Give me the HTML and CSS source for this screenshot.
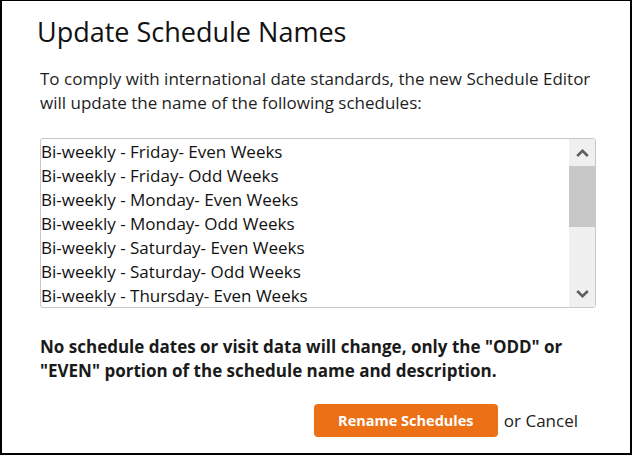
FILE: index.html
```html
<!DOCTYPE html>
<html>
<head>
<meta charset="utf-8">
<link rel="stylesheet" href="styles.css">
</head>
<body>
<div class="dialog">
  <h1 class="title">Update Schedule Names</h1>
  <p class="intro">To comply with international date standards, the new Schedule Editor will update the name of the following schedules:</p>
  <div class="listbox">
    <ul class="items">
      <li>Bi-weekly - Friday- Even Weeks</li>
      <li>Bi-weekly - Friday- Odd Weeks</li>
      <li>Bi-weekly - Monday- Even Weeks</li>
      <li>Bi-weekly - Monday- Odd Weeks</li>
      <li>Bi-weekly - Saturday- Even Weeks</li>
      <li>Bi-weekly - Saturday- Odd Weeks</li>
      <li>Bi-weekly - Thursday- Even Weeks</li>
    </ul>
    <div class="scrollbar">
      <div class="arrow">
        <svg width="13" height="8" viewBox="0 0 13 8"><path d="M1.2 7 L6.5 1.8 L11.8 7" fill="none" stroke="#606060" stroke-width="2.6"/></svg>
      </div>
      <div class="track">
        <div class="thumb"></div>
      </div>
      <div class="arrow">
        <svg width="13" height="8" viewBox="0 0 13 8"><path d="M1.2 1 L6.5 6.2 L11.8 1" fill="none" stroke="#606060" stroke-width="2.6"/></svg>
      </div>
    </div>
  </div>
  <p class="note">No schedule dates or visit data will change, only the "ODD" or "EVEN" portion of the schedule name and description.</p>
  <div class="actions">
    <button class="primary">Rename Schedules</button>
    <span class="cancel">or Cancel</span>
  </div>
</div>
</body>
</html>
```
FILE: styles.css
```css
html, body {
  margin: 0;
  padding: 0;
  background: #fff;
}
.dialog {
  box-sizing: border-box;
  width: 632px;
  height: 455px;
  border-style: solid;
  border-color: #000;
  border-width: 1px 2px 2px 2px;
  padding: 14px 34px 0 36px;
  font-family: "Open Sans", "Noto Sans", sans-serif;
  color: #1e1e1e;
}
.title {
  margin: 0 0 0 -1px;
  font-weight: 400;
  font-size: 27px;
  line-height: 34px;
  color: #111;
}
.intro {
  margin: 18px 0 0 2px;
  font-size: 17px;
  line-height: 24px;
}
.listbox {
  margin: 23px 0 0 2px;
  height: 170px;
  box-sizing: border-box;
  border: 1px solid #c8c8c8;
  border-radius: 3px;
  display: flex;
  overflow: hidden;
}
.items {
  flex: 1;
  margin: 0;
  padding: 1px 0 0 0;
  list-style: none;
  font-size: 17px;
  line-height: 24px;
  color: #111;
}
.scrollbar {
  width: 26px;
  background: #f0f0f0;
  display: flex;
  flex-direction: column;
}
.arrow {
  height: 27px;
  display: flex;
  align-items: center;
  justify-content: center;
}
.track {
  flex: 1;
}
.thumb {
  height: 61px;
  background: #c8c8c8;
}
.note {
  margin: 27px 0 0 2px;
  font-size: 17px;
  line-height: 24px;
  font-weight: 700;
  color: #1a1a1a;
}
.actions {
  margin-top: 21px;
  display: flex;
  align-items: center;
  justify-content: flex-end;
  padding-right: 18px;
}
.primary {
  width: 184px;
  height: 33px;
  border: none;
  border-radius: 4px;
  background: #ec7016;
  color: #fff;
  font-family: "Open Sans", "Noto Sans", sans-serif;
  font-weight: 700;
  font-size: 14.5px;
  padding: 0;
}
.cancel {
  margin-left: 6px;
  font-size: 17px;
  color: #222;
}
```
